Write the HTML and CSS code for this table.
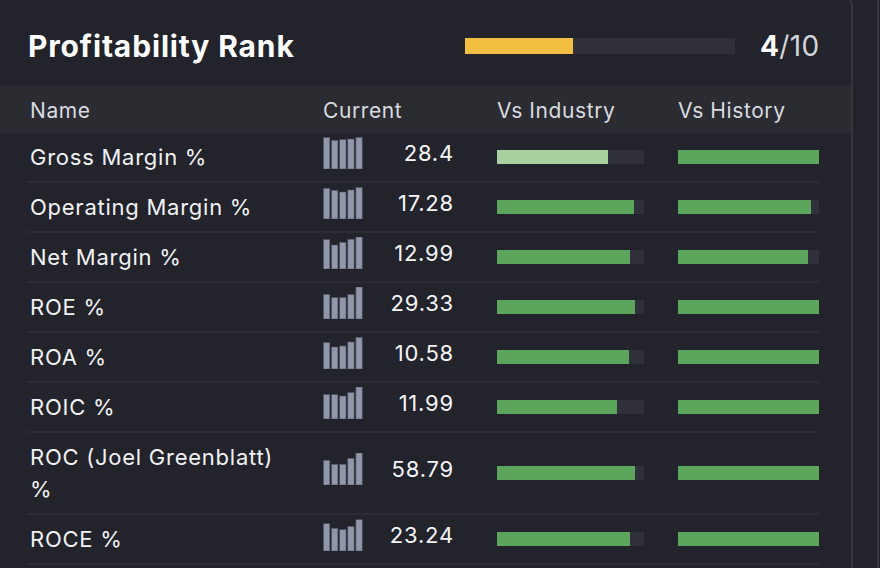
FILE: index.html
```html
<!DOCTYPE html>
<html>
<head>
<meta charset="utf-8">
<link rel="stylesheet" href="styles.css">
</head>
<body>
<div class="page">
  <section class="card">
    <div class="title-row">
      <h1 class="title">Profitability Rank</h1>
      <div class="rank-bar"><div class="rank-fill" style="width:40%"></div></div>
      <div class="rank-text"><b>4</b>/10</div>
    </div>
    <div class="head">
      <div class="grid">
        <div class="c-name">Name</div>
        <div class="c-cur">Current</div>
        <div class="c-ind">Vs Industry</div>
        <div class="c-his">Vs History</div>
      </div>
    </div>
    <div class="rows">
      <div class="grid row">
        <div class="c-name">Gross Margin %</div>
        <div class="c-cur"><svg class="spark" viewBox="0 0 40 32"><rect x="0.5" y="0.6" width="6.3" height="31.4"/><rect x="8.6" y="3.3" width="6.3" height="28.7"/><rect x="16.7" y="2.6" width="6.3" height="29.4"/><rect x="24.8" y="2" width="6.3" height="30"/><rect x="32.9" y="0.3" width="6.3" height="31.7"/></svg><span class="num">28.4</span></div>
        <div class="c-ind"><div class="bar"><div class="fill light" style="width:75.5%"></div></div></div>
        <div class="c-his"><div class="bar"><div class="fill" style="width:100%"></div></div></div>
      </div>
      <div class="grid row">
        <div class="c-name">Operating Margin %</div>
        <div class="c-cur"><svg class="spark" viewBox="0 0 40 32"><rect x="0.5" y="1.3" width="6.3" height="30.7"/><rect x="8.6" y="3.3" width="6.3" height="28.7"/><rect x="16.7" y="5" width="6.3" height="27"/><rect x="24.8" y="3" width="6.3" height="29"/><rect x="32.9" y="0.6" width="6.3" height="31.4"/></svg><span class="num">17.28</span></div>
        <div class="c-ind"><div class="bar"><div class="fill" style="width:93%"></div></div></div>
        <div class="c-his"><div class="bar"><div class="fill" style="width:94.3%"></div></div></div>
      </div>
      <div class="grid row">
        <div class="c-name">Net Margin %</div>
        <div class="c-cur"><svg class="spark" viewBox="0 0 40 32"><rect x="0.5" y="2.6" width="6.3" height="29.4"/><rect x="8.6" y="8" width="6.3" height="24"/><rect x="16.7" y="5.3" width="6.3" height="26.7"/><rect x="24.8" y="2.3" width="6.3" height="29.7"/><rect x="32.9" y="0" width="6.3" height="32"/></svg><span class="num">12.99</span></div>
        <div class="c-ind"><div class="bar"><div class="fill" style="width:90.5%"></div></div></div>
        <div class="c-his"><div class="bar"><div class="fill" style="width:92.2%"></div></div></div>
      </div>
      <div class="grid row">
        <div class="c-name">ROE %</div>
        <div class="c-cur"><svg class="spark" viewBox="0 0 40 32"><rect x="0.5" y="7.3" width="6.3" height="24.7"/><rect x="8.6" y="10.6" width="6.3" height="21.4"/><rect x="16.7" y="10.6" width="6.3" height="21.4"/><rect x="24.8" y="7.6" width="6.3" height="24.4"/><rect x="32.9" y="0" width="6.3" height="32"/></svg><span class="num">29.33</span></div>
        <div class="c-ind"><div class="bar"><div class="fill" style="width:94%"></div></div></div>
        <div class="c-his"><div class="bar"><div class="fill" style="width:100%"></div></div></div>
      </div>
      <div class="grid row">
        <div class="c-name">ROA %</div>
        <div class="c-cur"><svg class="spark" viewBox="0 0 40 32"><rect x="0.5" y="5.6" width="6.3" height="26.4"/><rect x="8.6" y="10" width="6.3" height="22"/><rect x="16.7" y="9" width="6.3" height="23"/><rect x="24.8" y="5" width="6.3" height="27"/><rect x="32.9" y="0.3" width="6.3" height="31.7"/></svg><span class="num">10.58</span></div>
        <div class="c-ind"><div class="bar"><div class="fill" style="width:89.8%"></div></div></div>
        <div class="c-his"><div class="bar"><div class="fill" style="width:100%"></div></div></div>
      </div>
      <div class="grid row">
        <div class="c-name">ROIC %</div>
        <div class="c-cur"><svg class="spark" viewBox="0 0 40 32"><rect x="0.5" y="7.6" width="6.3" height="24.4"/><rect x="8.6" y="7.6" width="6.3" height="24.4"/><rect x="16.7" y="9" width="6.3" height="23"/><rect x="24.8" y="5.6" width="6.3" height="26.4"/><rect x="32.9" y="0" width="6.3" height="32"/></svg><span class="num">11.99</span></div>
        <div class="c-ind"><div class="bar"><div class="fill" style="width:81.6%"></div></div></div>
        <div class="c-his"><div class="bar"><div class="fill" style="width:100%"></div></div></div>
      </div>
      <div class="grid row">
        <div class="c-name">ROC (Joel Greenblatt) %</div>
        <div class="c-cur"><svg class="spark" viewBox="0 0 40 32"><rect x="0.5" y="7.3" width="6.3" height="24.7"/><rect x="8.6" y="11.3" width="6.3" height="20.7"/><rect x="16.7" y="11.3" width="6.3" height="20.7"/><rect x="24.8" y="5.3" width="6.3" height="26.7"/><rect x="32.9" y="0" width="6.3" height="32"/></svg><span class="num">58.79</span></div>
        <div class="c-ind"><div class="bar"><div class="fill" style="width:94%"></div></div></div>
        <div class="c-his"><div class="bar"><div class="fill" style="width:100%"></div></div></div>
      </div>
      <div class="grid row">
        <div class="c-name">ROCE %</div>
        <div class="c-cur"><svg class="spark" viewBox="0 0 40 32"><rect x="0.5" y="4.7" width="6.3" height="27.3"/><rect x="8.6" y="9.3" width="6.3" height="22.7"/><rect x="16.7" y="10.7" width="6.3" height="21.3"/><rect x="24.8" y="7.3" width="6.3" height="24.7"/><rect x="32.9" y="0.7" width="6.3" height="31.3"/></svg><span class="num">23.24</span></div>
        <div class="c-ind"><div class="bar"><div class="fill" style="width:90.5%"></div></div></div>
        <div class="c-his"><div class="bar"><div class="fill" style="width:100%"></div></div></div>
      </div>
    </div>
  </section>
  <section class="card2"></section>
</div>
</body>
</html>
```

FILE: styles.css
```css
* { box-sizing: border-box; }
html, body {
  margin: 0;
  padding: 0;
  background: #22232b;
  font-family: Inter, "Noto Sans", "Liberation Sans", sans-serif;
  color: #f1f2f4;
  overflow: hidden;
}
.page {
  display: flex;
  gap: 24px;
  height: 568px;
}
.card {
  width: 853px;
  flex: none;
  margin-top: -6px;
  padding-top: 6px;
  border-right: 2px solid #36373d;
  border-top: 1px solid #2e2f35;
  border-top-right-radius: 12px;
  background: #22232b;
}
.card2 {
  flex: 1;
  margin-top: -6px;
  border-left: 2px solid #36373d;
  border-top: 1px solid #2e2f35;
  border-top-left-radius: 12px;
}
.title-row {
  height: 84px;
  display: flex;
  align-items: center;
  padding-left: 28px;
  padding-top: 6px;
}
.title {
  margin: 0;
  width: 437px;
  flex: none;
  font-size: 30px;
  font-weight: 700;
  color: #ffffff;
  letter-spacing: 0.85px;
}
.rank-bar {
  width: 270px;
  height: 16px;
  background: #2f3039;
  flex: none;
}
.rank-fill {
  height: 100%;
  background: #f2be42;
}
.rank-text {
  margin-left: 25px;
  font-size: 28px;
  letter-spacing: 0.4px;
  color: #d3d5da;
  font-weight: 400;
}
.rank-text b {
  color: #ffffff;
  font-weight: 700;
}
.head {
  background: #2b2c31;
  height: 48px;
  padding-left: 27px;
  display: flex;
  align-items: center;
  padding-top: 3px;
  font-size: 21px;
  letter-spacing: 0.6px;
  color: #d9dbe0;
}
.grid {
  display: grid;
  grid-template-columns: 296px 174px 181px 141px;
  width: 792px;
}
.c-name { padding-left: 3px; }
.rows {
  margin-left: 27px;
  width: 792px;
}
.row {
  font-size: 22px;
  letter-spacing: 0.75px;
  line-height: 32px;
  min-height: 50px;
  padding: 8px 0;
  border-bottom: 2px solid #2c2d33;
  align-items: center;
}
.row .c-name {
  padding-right: 42px;
}
.row .c-cur {
  display: flex;
  align-items: center;
  padding-right: 43px;
  height: 32px;
  margin-top: -8px;
}
.spark {
  width: 40px;
  height: 32px;
  flex: none;
}
.spark rect {
  fill: #9097ab;
  stroke: #50535f;
  stroke-width: 0.6;
}
.num {
  flex: 1;
  text-align: right;
  color: #f4f5f7;
  letter-spacing: 0.8px;
}
.bar {
  height: 14px;
  background: #2f3039;
}
.c-ind .bar { width: 147px; }
.c-his .bar { width: 141px; }
.fill {
  height: 100%;
  background: #5ba65c;
}
.fill.light { background: #a8d09e; }
```
